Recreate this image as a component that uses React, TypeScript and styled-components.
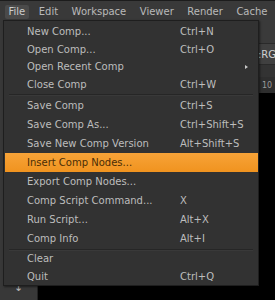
import styled, {createGlobalStyle, css} from "styled-components";

const GlobalStyle = createGlobalStyle`
  html, body {
    margin: 0;
    padding: 0;
    background: #000;
  }
`

const Screen = styled.div`
  position: relative;
  width: 275px;
  height: 300px;
  overflow: hidden;
  display: flex;
  flex-direction: column;
  font-family: "DejaVu Sans", Verdana, sans-serif;
  font-size: 10px;
  background: #000;
`

const MenuBar = styled.div`
  height: 19px;
  border-top: 1px solid #1c1c1c;
  background: #393939;
  display: flex;
  align-items: center;
  gap: 6.5px;
  padding-left: 5px;
  white-space: nowrap;
`

const BarItem = styled.div<{$active?: boolean}>`
  height: 14px;
  line-height: 14px;
  margin-top: 2px;
  padding: 0 3.5px;
  color: #b9b9b9;
  border-radius: 2px;
  ${p => p.$active && css`
    background: #4a4a4a;
    color: #cccccc;
  `}
`

const Workspace = styled.div`
  flex: 1;
  display: grid;
  grid-template-columns: 38px 1fr;
`

const LeftDock = styled.div`
  background: #383838;
  border-right: 1px solid #222;
  display: flex;
  flex-direction: column;
  justify-content: flex-end;
  align-items: center;
  padding-bottom: 6px;
  color: #b5b5b5;
  font-size: 11px;
`

const Viewer = styled.div`
  display: flex;
  flex-direction: column;
`

const ViewerHeader = styled.div`
  height: 23px;
  background: #3a3a3a;
  border-bottom: 1px solid #2a2a2a;
`

const ViewerToolbar = styled.div`
  height: 20px;
  background: #404040;
  display: flex;
  align-items: center;
  padding-left: 220px;
  color: #d0d0d0;
  white-space: nowrap;
  font-size: 10px;
`

const ViewerStrip = styled.div`
  height: 12px;
  background: #333;
  border-top: 1px solid #2a2a2a;
`

const ViewerRuler = styled.div`
  height: 16px;
  background: #2e2e2e;
  display: flex;
  align-items: center;
  padding-left: 224px;
  color: #9a9a9a;
  font-size: 8px;
`

const ViewerCanvas = styled.div`
  flex: 1;
  background: #000;
`

const Menu = styled.div`
  position: absolute;
  top: 20px;
  left: 3px;
  width: 254px;
  border: 1px solid #1e1e1e;
  background: #323232;
  padding-top: 2px;
  box-shadow: 1px 1px 2px rgba(0, 0, 0, 0.5);
`

const Row = styled.div<{$h: number; $active?: boolean}>`
  position: relative;
  display: grid;
  grid-template-columns: 153px 1fr;
  align-items: center;
  height: ${p => p.$h}px;
  margin-left: 1px;
  padding-left: 22px;
  color: #bdbdbd;
  white-space: nowrap;
  ${p => p.$active && css`
    background: linear-gradient(#f7a338, #f0931f);
    color: #4a2d06;
  `}
`

const Separator = styled.div<{$h: number}>`
  height: ${p => p.$h}px;
  display: flex;
  align-items: center;
  padding: 0 5px;

  &::after {
    content: "";
    flex: 1;
    height: 1px;
    background: #262626;
    box-shadow: 0 1px 0 #393939;
  }
`

const SubArrow = styled.span`
  position: absolute;
  right: 10px;
  top: 50%;
  margin-top: -2px;
  width: 0;
  height: 0;
  border-top: 2px solid transparent;
  border-bottom: 2px solid transparent;
  border-left: 3px solid #c8c8c8;
`

type Item = {label: string; shortcut?: string; sub?: boolean; active?: boolean};

const groups: {h: number; items: Item[]}[] = [
  {
    h: 17.5,
    items: [
      {label: "New Comp...", shortcut: "Ctrl+N"},
      {label: "Open Comp...", shortcut: "Ctrl+O"},
      {label: "Open Recent Comp", sub: true},
      {label: "Close Comp", shortcut: "Ctrl+W"},
    ],
  },
  {
    h: 19,
    items: [
      {label: "Save Comp", shortcut: "Ctrl+S"},
      {label: "Save Comp As...", shortcut: "Ctrl+Shift+S"},
      {label: "Save New Comp Version", shortcut: "Alt+Shift+S"},
      {label: "Insert Comp Nodes...", active: true},
      {label: "Export Comp Nodes..."},
      {label: "Comp Script Command...", shortcut: "X"},
      {label: "Run Script...", shortcut: "Alt+X"},
      {label: "Comp Info", shortcut: "Alt+I"},
    ],
  },
  {
    h: 17.5,
    items: [
      {label: "Clear"},
      {label: "Quit", shortcut: "Ctrl+Q"},
    ],
  },
];

const barItems = ["File", "Edit", "Workspace", "Viewer", "Render", "Cache"];

const App = () => {
  return (
    <>
      <GlobalStyle/>
      <Screen>
        <MenuBar>
          {barItems.map((name, i) => (
            <BarItem key={name} $active={i === 0}>{name}</BarItem>
          ))}
        </MenuBar>
        <Workspace>
          <LeftDock>↓</LeftDock>
          <Viewer>
            <ViewerHeader/>
            <ViewerToolbar>:RG</ViewerToolbar>
            <ViewerStrip/>
            <ViewerRuler>10</ViewerRuler>
            <ViewerCanvas/>
          </Viewer>
        </Workspace>
        <Menu>
          {groups.map((group, gi) => (
            <div key={gi}>
              {gi > 0 && <Separator $h={gi === 1 ? 3 : 2}/>}
              {group.items.map(item => (
                <Row key={item.label} $h={group.h} $active={item.active}>
                  <span>{item.label}</span>
                  <span>{item.shortcut}</span>
                  {item.sub && <SubArrow/>}
                </Row>
              ))}
            </div>
          ))}
        </Menu>
      </Screen>
    </>
  );
}

export default App;
